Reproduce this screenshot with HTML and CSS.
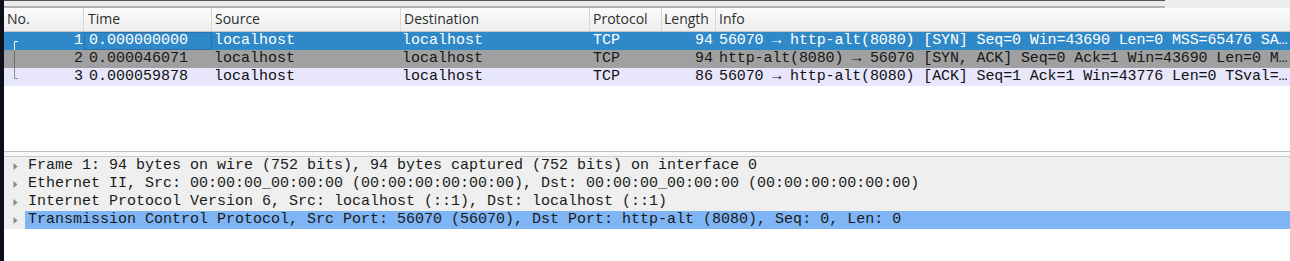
FILE: index.html
```html
<!DOCTYPE html>
<html>
<head>
<meta charset="utf-8">
<link rel="stylesheet" href="styles.css">
</head>
<body>
<div class="app">
  <div class="edge"></div>
  <div class="main">
    <div class="topbar"><div class="thumb"></div></div>
    <div class="plist">
      <div class="prow head">
        <div class="c c-no">No.</div>
        <div class="c c-time">Time</div>
        <div class="c c-src">Source</div>
        <div class="c c-dst">Destination</div>
        <div class="c c-proto">Protocol</div>
        <div class="c c-len">Length</div>
        <div class="c c-info">Info</div>
      </div>
      <div class="prow sel">
        <div class="c c-no"><svg class="tree" width="14" height="18" viewBox="0 0 14 18"><path d="M10.5 9.5H19M10.5 9.5V18" stroke="#ffffff" stroke-width="1" fill="none"/></svg><span>1</span></div>
        <div class="c c-time focus">0.000000000</div>
        <div class="c c-src">localhost</div>
        <div class="c c-dst">localhost</div>
        <div class="c c-proto">TCP</div>
        <div class="c c-len">94</div>
        <div class="c c-info">56070 → http-alt(8080) [SYN] Seq=0 Win=43690 Len=0 MSS=65476 SACK_PERM=1 TSval=1 TSecr=0 WS=128</div>
      </div>
      <div class="prow gray">
        <div class="c c-no"><svg class="tree" width="14" height="18" viewBox="0 0 14 18"><path d="M10.5 0V18" stroke="#6e6e6e" stroke-width="1" fill="none"/></svg><span>2</span></div>
        <div class="c c-time">0.000046071</div>
        <div class="c c-src">localhost</div>
        <div class="c c-dst">localhost</div>
        <div class="c c-proto">TCP</div>
        <div class="c c-len">94</div>
        <div class="c c-info">http-alt(8080) → 56070 [SYN, ACK] Seq=0 Ack=1 Win=43690 Len=0 MSS=65476 SACK_PERM=1</div>
      </div>
      <div class="prow lav">
        <div class="c c-no"><svg class="tree" width="14" height="18" viewBox="0 0 14 18"><path d="M10.5 0V10.5H19" stroke="#8c8c8c" stroke-width="1" fill="none"/></svg><span>3</span></div>
        <div class="c c-time">0.000059878</div>
        <div class="c c-src">localhost</div>
        <div class="c c-dst">localhost</div>
        <div class="c c-proto">TCP</div>
        <div class="c c-len">86</div>
        <div class="c c-info">56070 → http-alt(8080) [ACK] Seq=1 Ack=1 Win=43776 Len=0 TSval=1 TSecr=1</div>
      </div>
    </div>
    <div class="splitter"></div>
    <div class="details">
      <div class="drow"><svg class="arrow" width="8" height="18" viewBox="0 0 8 18"><path d="M3.5 6L7.5 9.5L3.5 13Z" fill="#8a8a8a"/></svg><span class="dt">Frame 1: 94 bytes on wire (752 bits), 94 bytes captured (752 bits) on interface 0</span></div>
      <div class="drow"><svg class="arrow" width="8" height="18" viewBox="0 0 8 18"><path d="M3.5 6L7.5 9.5L3.5 13Z" fill="#8a8a8a"/></svg><span class="dt">Ethernet II, Src: 00:00:00_00:00:00 (00:00:00:00:00:00), Dst: 00:00:00_00:00:00 (00:00:00:00:00:00)</span></div>
      <div class="drow"><svg class="arrow" width="8" height="18" viewBox="0 0 8 18"><path d="M3.5 6L7.5 9.5L3.5 13Z" fill="#8a8a8a"/></svg><span class="dt">Internet Protocol Version 6, Src: localhost (::1), Dst: localhost (::1)</span></div>
      <div class="drow"><svg class="arrow" width="8" height="18" viewBox="0 0 8 18"><path d="M3.5 6L7.5 9.5L3.5 13Z" fill="#8a8a8a"/></svg><span class="dt hl">Transmission Control Protocol, Src Port: 56070 (56070), Dst Port: http-alt (8080), Seq: 0, Len: 0</span></div>
    </div>
  </div>
</div>
</body>
</html>
```
FILE: styles.css
```css
html, body {
  margin: 0;
  padding: 0;
  background: #ffffff;
}
.app {
  display: flex;
  width: 1290px;
  height: 261px;
  overflow: hidden;
}
.edge {
  width: 4px;
  flex: none;
  background: #0b0f1c;
}
.main {
  flex: 1;
  display: flex;
  flex-direction: column;
  min-width: 0;
}
.topbar {
  height: 8px;
  background: #ececec;
  display: flex;
}
.thumb {
  width: 1161px;
  box-sizing: border-box;
  border-top: 1px solid #565656;
  border-bottom: 2px solid #b2b2b2;
  background: #ebebeb;
}
.plist {
  height: 143px;
  background: #ffffff;
}
.prow {
  display: grid;
  grid-template-columns: 80px 128px 189px 189px 72px 54px 1fr;
  height: 18px;
  font-family: "Liberation Mono", monospace;
  font-size: 15px;
  line-height: 18px;
  color: #111;
}
.prow .c {
  padding: 0 3px;
  white-space: pre;
  overflow: hidden;
  box-sizing: border-box;
}
.prow.head {
  height: 24px;
  font-family: "Open Sans", sans-serif;
  font-size: 14px;
  line-height: 22px;
  color: #2e2e2e;
  background: linear-gradient(#fbfbfb, #ededed);
  border-bottom: 1px solid #c9c9c9;
  box-sizing: border-box;
}
.prow.head .c {
  border-right: 1px solid #d6d6d6;
  padding: 0 2px 0 3px;
}
.prow.head .c-info {
  border-right: none;
}
.prow .c-no {
  display: flex;
  justify-content: space-between;
  padding: 0 1px 0 0;
}
.prow.head .c-no {
  display: block;
  padding-left: 3px;
}
.tree {
  display: block;
  margin-left: 0;
}
.prow .c-time {
  padding-left: 5px;
}
.prow.head .c-time {
  padding-left: 4px;
}
.prow .c-src {
  padding-left: 2px;
}
.prow .c-dst {
  padding-left: 1px;
}
.prow .c-len {
  text-align: right;
  padding-right: 3px;
}
.prow.head .c-len {
  text-align: left;
  padding-left: 2px;
}
.prow .c-info {
  text-overflow: ellipsis;
  padding-right: 0;
  letter-spacing: -0.12px;
}
.prow.head .c-info {
  letter-spacing: normal;
}
.prow.sel {
  background: #2f89c8;
  color: #ffffff;
}
.prow.gray {
  background: #a0a0a0;
  color: #161616;
}
.prow.lav {
  background: #e7e6fb;
  color: #111111;
}
.focus {
  box-shadow: inset 0 0 0 1px #2b72ad;
}
.splitter {
  height: 6px;
  box-sizing: border-box;
  border-top: 1px solid #c2c2c2;
  border-bottom: 1px solid #cbcbcb;
  background: #f7f7f7;
}
.details {
  flex: 1;
  background: #ffffff;
}
.drow {
  display: flex;
  height: 18px;
  background: #efefef;
  font-family: "Liberation Mono", monospace;
  font-size: 15px;
  line-height: 18px;
  color: #1a1a1a;
}
.arrow {
  flex: none;
  margin-left: 6px;
  margin-right: 7px;
}
.dt {
  flex: 1;
  white-space: pre;
  padding-left: 3px;
}
.dt.hl {
  background: #80b5f5;
}
```
